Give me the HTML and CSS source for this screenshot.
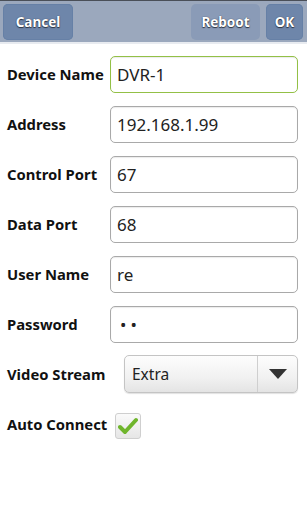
FILE: index.html
```html
<!DOCTYPE html>
<html>
<head>
<meta charset="utf-8">
<link rel="stylesheet" href="styles.css">
</head>
<body>
<div class="topbar">
  <button class="btn btn-dark">Cancel</button>
  <div class="spacer"></div>
  <button class="btn btn-light">Reboot</button>
  <button class="btn btn-dark ok">OK</button>
</div>
<div class="form">
  <label class="label">Device Name</label>
  <div class="field focused">DVR-1</div>
  <label class="label">Address</label>
  <div class="field">192.168.1.99</div>
  <label class="label">Control Port</label>
  <div class="field">67</div>
  <label class="label">Data Port</label>
  <div class="field">68</div>
  <label class="label">User Name</label>
  <div class="field">re</div>
  <label class="label">Password</label>
  <div class="field pw">••</div>
  <label class="label">Video Stream</label>
  <div class="spinner">
    <span class="spin-text">Extra</span>
    <span class="spin-btn"><svg width="18" height="10" viewBox="0 0 18 10"><polygon points="0,0 18,0 9,10" fill="#333"/></svg></span>
  </div>
  <label class="label">Auto Connect</label>
  <div class="checkwrap">
    <span class="check"><svg width="20" height="18" viewBox="0 0 20 18"><path d="M2 10 L7 15 L18 3" fill="none" stroke="#6fb52c" stroke-width="4" stroke-linecap="round" stroke-linejoin="round"/></svg></span>
  </div>
</div>
</body>
</html>
```
FILE: styles.css
```css
* { box-sizing: border-box; }
html, body { margin: 0; padding: 0; background: #fff; }
body { width: 307px; height: 512px; font-family: "Noto Sans", "Open Sans", sans-serif; overflow: hidden; }

.topbar {
  height: 44px;
  background: #9ba8bd;
  border-top: 1px solid #4a4f58;
  border-bottom: 2px solid #e8ebf0;
  display: flex;
  align-items: center;
  padding: 0 4px 0 3px;
  gap: 6px;
}
.spacer { flex: 1; }
.btn {
  height: 36px;
  border: none;
  border-radius: 5px;
  font-family: "Noto Sans", sans-serif;
  font-weight: bold;
  font-size: 13.5px;
  color: #fff;
  text-shadow: 0 1px 1px #2a3240, 0 0 1px #2a3240;
  padding: 0;
}
.btn-dark { background: #6e86aa; width: 70px; box-shadow: inset 0 0 0 1px #6680a6; }
.btn-light { background: #8a9bb7; width: 69px; }
.ok { width: 37px; }

.form {
  display: grid;
  grid-template-columns: 103px 1fr;
  grid-auto-rows: 50px;
  align-items: center;
  padding: 5px 9px 0 7px;
}
.label {
  font-weight: bold;
  font-size: 14.8px;
  color: #111;
  white-space: nowrap;
}
.field {
  height: 37px;
  border: 1px solid #a9a9a9;
  border-radius: 5px;
  background: #fff;
  box-shadow: inset 0 1px 1px rgba(0,0,0,0.08);
  font-size: 17px;
  color: #222;
  padding: 0 6px;
  display: flex;
  align-items: center;
}
.field.focused { border: 1.5px solid #93c046; padding-left: 6px; }
.field.pw { font-size: 17px; letter-spacing: 4px; padding-left: 9px; }

.spinner {
  margin-left: 14px;
  height: 38px;
  border: 1px solid #c4c4c4;
  border-radius: 5px;
  background: linear-gradient(#fdfdfd, #f1f1f1 60%, #e4e4e4);
  box-shadow: 0 1px 1px rgba(0,0,0,0.12);
  display: flex;
  align-items: stretch;
}
.spin-text { flex: 1; display: flex; align-items: center; padding-left: 7px; font-size: 15.5px; color: #222; }
.spin-btn {
  width: 40px;
  border-left: 1px solid #cfcfcf;
  display: flex; align-items: center; justify-content: center;
}

.checkwrap { margin-left: 5px; display: flex; align-items: center; padding-top: 4px; }
.check {
  width: 26px; height: 26px;
  border: 1px solid #cfcfcf;
  border-radius: 3px;
  background: linear-gradient(#fafafa, #e6e6e6);
  display: flex; align-items: center; justify-content: center;
}
```
